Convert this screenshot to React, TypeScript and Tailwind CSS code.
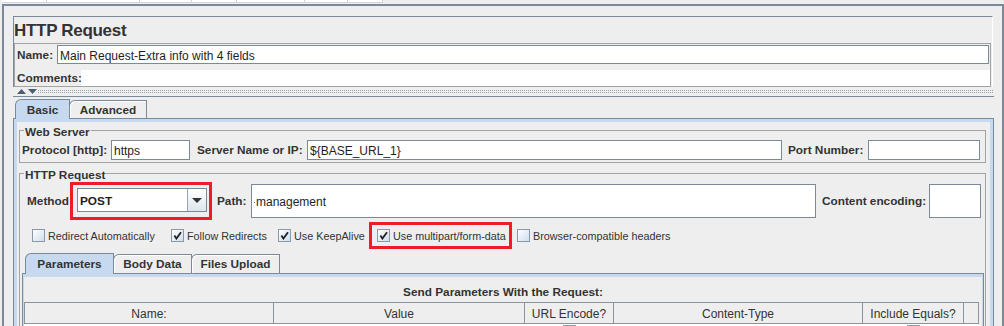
import clsx from "clsx";
import type { ReactNode } from "react";

function Box({ className, children }: { className?: string; children?: ReactNode }) {
  return (
    <div
      className={clsx(
        "flex shrink-0 items-center border border-[#7a8a99] bg-white pt-[2px] pl-[2px] text-[12px] text-[#1e1e1e]",
        className,
      )}
    >
      {children}
    </div>
  );
}

function Label({ className, children }: { className?: string; children: ReactNode }) {
  return (
    <span className={clsx("shrink-0 whitespace-nowrap pt-[2px] text-[11.8px] font-bold", className)}>
      {children}
    </span>
  );
}

function Legend({ children }: { children: ReactNode }) {
  return (
    <legend className="ml-[4px] h-[14px] px-px pt-[2px] text-[11.8px] leading-[14px] font-bold">
      {children}
    </legend>
  );
}

function Check({ checked }: { checked?: boolean }) {
  return (
    <span className="flex size-[13px] shrink-0 items-center justify-center border border-[#8a99a6] bg-linear-to-br from-white to-[#d0dded]">
      {checked && (
        <svg width="9" height="9" viewBox="0 0 9 9">
          <path d="M1.4 4.6 L3.4 7.6 L8 1.2" fill="none" stroke="#222" strokeWidth="1.8" />
        </svg>
      )}
    </span>
  );
}

function CheckItem({
  checked,
  label,
  className,
}: {
  checked?: boolean;
  label: string;
  className?: string;
}) {
  return (
    <div className={clsx("flex shrink-0 items-center", className)}>
      <Check checked={checked} />
      <span className="ml-[3px] whitespace-nowrap pt-[2px] text-[10.8px]">{label}</span>
    </div>
  );
}

function Tab({
  selected,
  className,
  children,
}: {
  selected?: boolean;
  className: string;
  children: ReactNode;
}) {
  return (
    <div
      className={clsx(
        "flex shrink-0 items-center justify-center rounded-tl-[6px] border border-b-0 border-[#7a8a99] pt-[2px] text-[11.8px] font-bold",
        selected
          ? "relative z-10 -mb-px bg-[#c6d9ef]"
          : "bg-[#eeeeee] shadow-[inset_1px_1px_0_#ffffff]",
        className,
      )}
    >
      {children}
    </div>
  );
}

const stripCells = ["w-[45px]", "w-[93px]", "w-[52px]", "w-[45px]", "w-[68px]", "w-[43px]", "w-[35px]"];

export default function App() {
  return (
    <div className="h-[326px] w-[1004px] overflow-hidden bg-[#eeeeee] font-['Liberation_Sans',Arial,sans-serif] text-[#333333]">
      {/* leftover of the tree/table above */}
      <div className="flex h-[4px] pl-[2px]">
        {stripCells.map((w, i) => (
          <div key={i} className={clsx("h-[3px] border-r border-b border-[#d4d4d4] bg-white", w)} />
        ))}
      </div>

      <div className="ml-[2px] h-[322px] w-[1002px] border-x-2 border-t-2 border-[#7a8a99] pl-[9px] pt-[10px]">
        {/* title + name/comments */}
        <div className="w-[980px] border-t border-l border-r border-[#7a8a99] border-r-white">
          <div className="h-[26px] pt-[3px] text-[17px] leading-[22px] font-bold tracking-[-0.3px]">
            HTTP Request
          </div>
          <div className="w-[977px] border border-[#a3a3a3]">
            <div className="mt-px flex h-[19px] items-center pl-[2px] pr-px">
              <Label className="w-[40px]">Name:</Label>
              <Box className="h-[19px] flex-1">Main Request-Extra info with 4 fields</Box>
            </div>
            <div className="mt-[6px] flex h-[16px] items-center pl-[2px]">
              <Label className="w-[64px]">Comments:</Label>
              <div className="h-full flex-1 bg-white" />
            </div>
          </div>
        </div>

        {/* split pane divider */}
        <div className="flex h-[9px] w-[980px] items-center pl-[4px]">
          <svg width="9" height="5" viewBox="0 0 9 5" className="shrink-0">
            <polygon points="0,5 4.5,0 9,5" fill="#4b5d70" />
          </svg>
          <svg width="9" height="5" viewBox="0 0 9 5" className="ml-[2px] shrink-0">
            <polygon points="0,0 9,0 4.5,5" fill="#4b5d70" />
          </svg>
          <div className="ml-px h-[3px] flex-1 border-y border-dotted border-[#9aa5b0]" />
        </div>

        {/* tabbed pane */}
        <div className="w-[981px] border-t border-[#7a8a99]">
          <div className="flex h-[21px] items-end pl-[2px]">
            <Tab selected className="h-[20px] w-[55px]">
              Basic
            </Tab>
            <Tab className="-ml-px h-[18px] w-[78px]">Advanced</Tab>
          </div>
          <div className="h-[220px] border-x border-t border-[#7a8a99]">
            <div className="h-full border-x-[3px] border-t-[3px] border-[#c6d9ef]">
              <fieldset className="mt-px ml-[2px] w-[967px] border border-[#a3a3a3]">
                <Legend>Web Server</Legend>
                <div className="flex items-center pt-[3px] pb-[2px] pl-[2px]">
                  <Label className="w-[89px]">Protocol [http]:</Label>
                  <Box className="h-[20px] w-[79px]">https</Box>
                  <Label className="ml-[7px] w-[110px]">Server Name or IP:</Label>
                  <Box className="h-[20px] w-[475px]">{"${BASE_URL_1}"}</Box>
                  <Label className="ml-[6px] w-[80px]">Port Number:</Label>
                  <Box className="h-[20px] w-[112px]" />
                </div>
              </fieldset>

              <fieldset className="mt-[3px] ml-[2px] w-[967px] border border-[#a3a3a3]">
                <Legend>HTTP Request</Legend>
                <div className="pt-[2px]">
                  <div className="flex h-[38px] items-center pl-[7px]">
                    <Label className="w-[43px]">Method</Label>
                    <div className="h-[38px] w-[142px] shrink-0 border-[3px] border-[#ee1c24] pt-[3px] pl-[4px]">
                      <div className="flex h-[24px] w-[130px] border border-[#7a8a99] bg-white">
                        <span className="flex-1 pt-[2px] pl-[2px] text-[11.8px] leading-[20px] font-bold text-[#1e1e1e]">
                          POST
                        </span>
                        <span className="flex w-[19px] items-center justify-center border-l border-[#9aa5b0] bg-linear-to-b from-white to-[#dde6ef]">
                          <svg width="10" height="5" viewBox="0 0 10 5">
                            <polygon points="0,0 10,0 5,5" fill="#333" />
                          </svg>
                        </span>
                      </div>
                    </div>
                    <Label className="ml-[5px] w-[34px]">Path:</Label>
                    <Box className="h-[34px] w-[565px]">
                      <span className="mr-px inline-block h-px w-px bg-[#777]" />
                      management
                    </Box>
                    <Label className="ml-[6px] w-[107px]">Content encoding:</Label>
                    <Box className="h-[34px] w-[52px]" />
                  </div>

                  <div className="mt-[2px] flex h-[27px] items-center pl-[12px]">
                    <CheckItem className="w-[139px]" label="Redirect Automatically" />
                    <CheckItem checked className="w-[107px]" label="Follow Redirects" />
                    <CheckItem checked className="w-[91px]" label="Use KeepAlive" />
                    <div className="flex h-[27px] w-[143px] shrink-0 items-center border-[3px] border-[#ee1c24] pl-[5px]">
                      <CheckItem checked label="Use multipart/form-data" />
                    </div>
                    <CheckItem className="ml-[5px]" label="Browser-compatible headers" />
                  </div>

                  <div className="mt-[4px] flex h-[20px] items-end pl-[5px]">
                    <Tab selected className="h-[21px] w-[89px]">
                      Parameters
                    </Tab>
                    <Tab className="-ml-px h-[19px] w-[79px]">Body Data</Tab>
                    <Tab className="-ml-px h-[19px] w-[89px]">Files Upload</Tab>
                  </div>

                  <div className="ml-[2px] w-[962px] border-x border-t border-[#7a8a99]">
                    <div className="h-[80px] border-x border-t-[3px] border-[#c6d9ef]">
                      <div className="pt-[7px] text-center text-[11.8px] leading-[16px] font-bold">
                        Send Parameters With the Request:
                      </div>
                      <div className="mt-[2px] flex w-[955px] border-t border-l border-[#8a949e] text-[12px] leading-[18px]">
                        <div className="h-[21px] w-[249px] border-r border-b border-[#8a949e] pt-[2px] text-center">Name:</div>
                        <div className="h-[21px] w-[251px] border-r border-b border-[#8a949e] pt-[2px] text-center">Value</div>
                        <div className="h-[21px] w-[89px] border-r border-b border-[#8a949e] pt-[2px] text-center">URL Encode?</div>
                        <div className="h-[21px] w-[249px] border-r border-b border-[#8a949e] pt-[2px] text-center">Content-Type</div>
                        <div className="h-[21px] w-[101px] border-r border-b border-[#8a949e] pt-[2px] text-center">Include Equals?</div>
                        <div className="h-[21px] w-[15px] border-r border-b border-[#8a949e]" />
                      </div>
                      <div className="flex h-[20px] w-[955px] bg-white">
                        <div className="w-[539px]" />
                        <div className="pt-px">
                          <Check />
                        </div>
                        <div className="w-[331px]" />
                        <div className="pt-px">
                          <Check />
                        </div>
                      </div>
                    </div>
                  </div>
                </div>
              </fieldset>
            </div>
          </div>
        </div>
      </div>
    </div>
  );
}
